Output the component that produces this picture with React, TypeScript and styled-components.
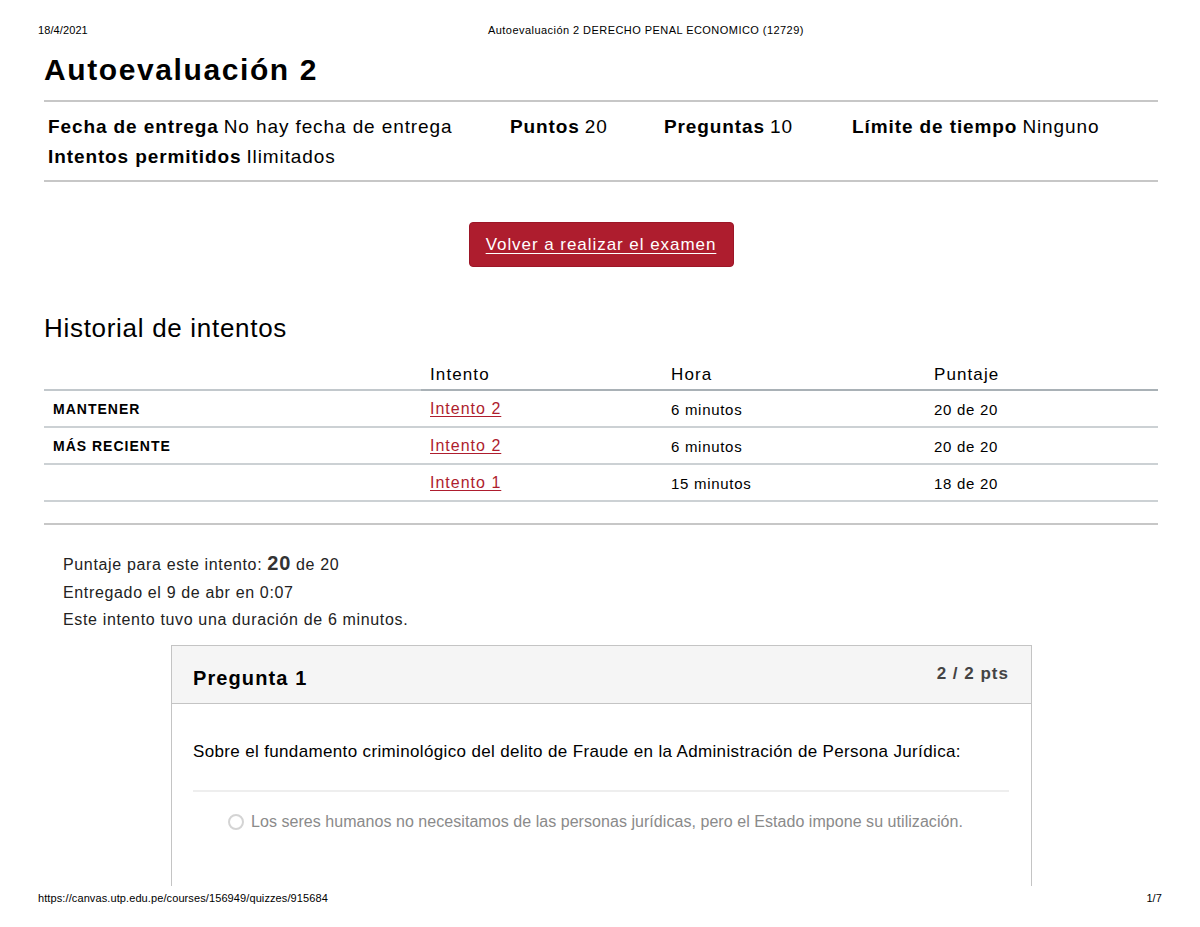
import styled, { createGlobalStyle } from "styled-components";

const GlobalStyle = createGlobalStyle`
  body {
    margin: 0;
    background: #fff;
    font-family: "Liberation Sans", Arial, sans-serif;
    color: #000;
  }
`;

const Page = styled.div`
  width: 1200px;
  height: 927px;
  display: flex;
  flex-direction: column;
  overflow: hidden;
`;

const PrintBar = styled.div`
  height: 46px;
  padding: 24px 38px 0;
  display: flex;
  align-items: flex-start;
  font-size: 11px;
  letter-spacing: 0.1px;
  box-sizing: border-box;

  span:first-child {
    width: 450px;
  }

  span:last-child {
    letter-spacing: 0.45px;
  }
`;

const PrintFoot = styled.div`
  height: 41px;
  padding: 6px 38px 0;
  box-sizing: border-box;
  display: flex;
  justify-content: space-between;
  font-size: 11px;
  letter-spacing: 0.1px;
`;

const Content = styled.main`
  flex: 1;
  min-height: 0;
  overflow: hidden;
  padding: 0 42px 0 44px;
`;

const Title = styled.h1`
  margin: 0;
  font-size: 30px;
  font-weight: bold;
  letter-spacing: 1.6px;
  line-height: 48px;
  padding-bottom: 6px;
  border-bottom: 2px solid #c7c7c7;
`;

const Details = styled.ul`
  list-style: none;
  margin: 0;
  padding: 10px 4px 8px;
  display: flex;
  flex-wrap: wrap;
  font-size: 19px;
  letter-spacing: 0.9px;
  line-height: 30px;
  border-bottom: 2px solid #c7c7c7;
`;

const Detail = styled.li<{ $w: number }>`
  width: ${(p) => p.$w}px;
  white-space: nowrap;

  b {
    margin-right: 5px;
  }
`;

const Actions = styled.div`
  display: flex;
  justify-content: center;
  padding: 40px 0 0;
`;

const RedButton = styled.a`
  width: 265px;
  height: 45px;
  box-sizing: border-box;
  display: flex;
  align-items: center;
  justify-content: center;
  background: #ae1d2e;
  border: 1px solid #9c1627;
  border-radius: 4px;
  color: #fff;
  font-size: 17px;
  letter-spacing: 0.95px;
  text-decoration: underline;
  text-underline-offset: 3px;
`;

const SectionTitle = styled.h2`
  margin: 43px 0 0;
  font-size: 26px;
  font-weight: normal;
  letter-spacing: 0.7px;
  line-height: 36px;
`;

const History = styled.table`
  width: 100%;
  border-collapse: collapse;
  margin-top: 14px;
  font-size: 15px;
  letter-spacing: 0.7px;

  th {
    text-align: left;
    font-weight: normal;
    font-size: 17px;
    letter-spacing: 1.1px;
    padding: 5px 9px 4px;
    border-bottom: 2px solid #c2c8cc;
  }

  th:not(:first-child) {
    border-bottom-color: #a9b1b6;
  }

  td {
    height: 34px;
    padding: 1px 9px 0;
    border-bottom: 2px solid #ccd1d4;
  }
`;

const Label = styled.td`
  font-weight: bold;
  font-size: 14px;
  letter-spacing: 1px;
`;

const AttemptLink = styled.a`
  color: #ae1d2e;
  font-size: 16px;
  letter-spacing: 1px;
  text-decoration: underline;
  text-underline-offset: 2px;
`;

const Divider = styled.hr`
  margin: 21px 0 0;
  border: 0;
  border-top: 2px solid #c7c7c7;
`;

const Summary = styled.div`
  padding: 25px 0 0 19px;
  font-size: 16px;
  letter-spacing: 0.65px;
  line-height: 27.5px;
  color: #222;

  strong {
    font-size: 20px;
    color: #333;
  }
`;

const QuestionCard = styled.section`
  margin: 11px 0 0 127px;
  width: 859px;
  border: 1px solid #c4c4c4;
  border-bottom: 0;
`;

const QuestionHead = styled.header`
  height: 58px;
  box-sizing: border-box;
  background: #f5f5f5;
  border-bottom: 1px solid #c4c4c4;
  display: flex;
  justify-content: space-between;
  padding: 0 22px 0 21px;
`;

const QuestionName = styled.h3`
  margin: 0;
  padding-top: 21px;
  font-size: 20px;
  font-weight: bold;
  letter-spacing: 1.1px;
`;

const Points = styled.span`
  padding-top: 18px;
  font-size: 17px;
  font-weight: bold;
  letter-spacing: 1px;
  color: #444;
`;

const QuestionBody = styled.div`
  height: 300px;
  padding: 38px 22px 0 21px;
`;

const Prompt = styled.p`
  margin: 0;
  font-size: 17px;
  letter-spacing: 0.35px;
  line-height: 20px;
  padding-bottom: 28px;
  border-bottom: 2px solid #eeeeee;
`;

const Option = styled.label`
  display: flex;
  align-items: center;
  gap: 7px;
  margin: 21px 0 0 35px;
  font-size: 16px;
  letter-spacing: 0.05px;
  color: #8a8a8a;
`;

const Radio = styled.span`
  width: 12px;
  height: 12px;
  border: 2px solid #d4d4d4;
  border-radius: 50%;
  flex: none;
`;

const rows = [
  { label: "MANTENER", attempt: "Intento 2", time: "6 minutos", score: "20 de 20" },
  { label: "MÁS RECIENTE", attempt: "Intento 2", time: "6 minutos", score: "20 de 20" },
  { label: "", attempt: "Intento 1", time: "15 minutos", score: "18 de 20" },
];

export default function App() {
  return (
    <Page>
      <GlobalStyle />
      <PrintBar>
        <span>18/4/2021</span>
        <span>Autoevaluación 2 DERECHO PENAL ECONOMICO (12729)</span>
      </PrintBar>

      <Content>
        <Title>Autoevaluación 2</Title>
        <Details>
          <Detail $w={462}>
            <b>Fecha de entrega</b>No hay fecha de entrega
          </Detail>
          <Detail $w={154}>
            <b>Puntos</b>20
          </Detail>
          <Detail $w={188}>
            <b>Preguntas</b>10
          </Detail>
          <Detail $w={300}>
            <b>Límite de tiempo</b>Ninguno
          </Detail>
          <Detail $w={600}>
            <b>Intentos permitidos</b>Ilimitados
          </Detail>
        </Details>

        <Actions>
          <RedButton href="#">Volver a realizar el examen</RedButton>
        </Actions>

        <SectionTitle>Historial de intentos</SectionTitle>
        <History>
          <colgroup>
            <col style={{ width: 377 }} />
            <col style={{ width: 241 }} />
            <col style={{ width: 263 }} />
            <col />
          </colgroup>
          <thead>
            <tr>
              <th></th>
              <th>Intento</th>
              <th>Hora</th>
              <th>Puntaje</th>
            </tr>
          </thead>
          <tbody>
            {rows.map((r, i) => (
              <tr key={i}>
                <Label>{r.label}</Label>
                <td>
                  <AttemptLink href="#">{r.attempt}</AttemptLink>
                </td>
                <td>{r.time}</td>
                <td>{r.score}</td>
              </tr>
            ))}
          </tbody>
        </History>
        <Divider />

        <Summary>
          <div>
            Puntaje para este intento: <strong>20</strong> de 20
          </div>
          <div>Entregado el 9 de abr en 0:07</div>
          <div>Este intento tuvo una duración de 6 minutos.</div>
        </Summary>

        <QuestionCard>
          <QuestionHead>
            <QuestionName>Pregunta 1</QuestionName>
            <Points>2 / 2 pts</Points>
          </QuestionHead>
          <QuestionBody>
            <Prompt>
              Sobre el fundamento criminológico del delito de Fraude en la
              Administración de Persona Jurídica:
            </Prompt>
            <Option>
              <Radio />
              Los seres humanos no necesitamos de las personas jurídicas, pero
              el Estado impone su utilización.
            </Option>
          </QuestionBody>
        </QuestionCard>
      </Content>

      <PrintFoot>
        <span>https://canvas.utp.edu.pe/courses/156949/quizzes/915684</span>
        <span>1/7</span>
      </PrintFoot>
    </Page>
  );
}
